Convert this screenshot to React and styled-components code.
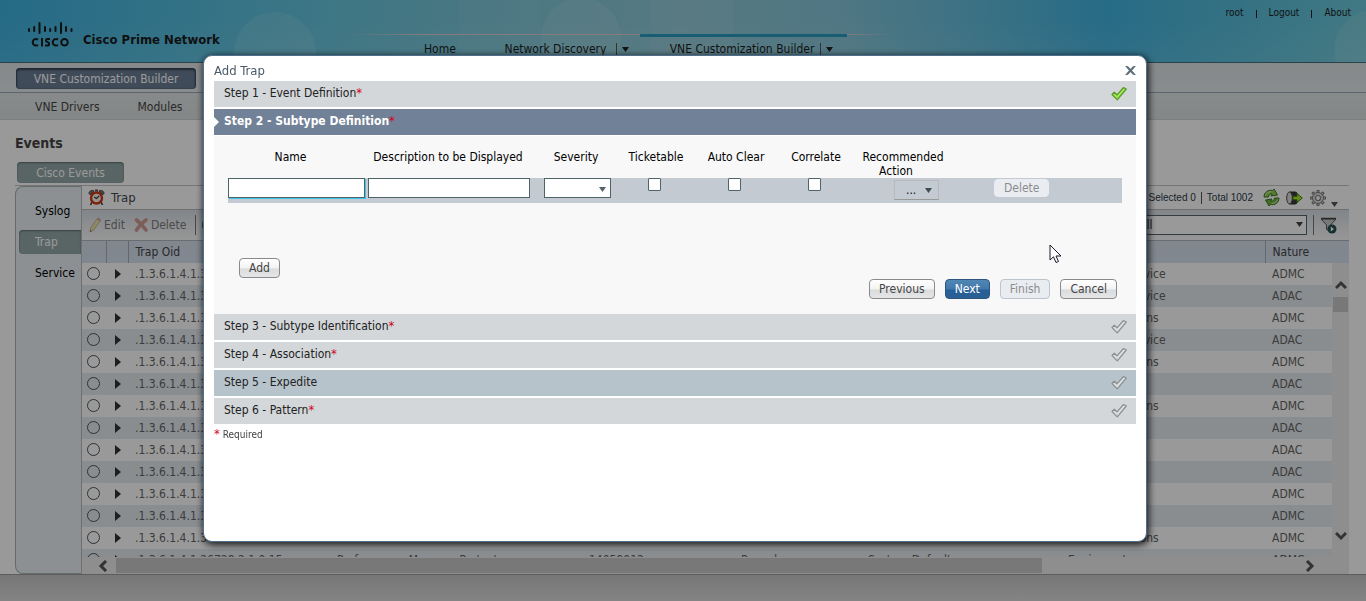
import React from 'react'
import styled, { createGlobalStyle, css } from 'styled-components'

const rows = [
  { type: 'Quality Of Service', nature: 'ADMC' },
  { type: 'Quality Of Service', nature: 'ADAC' },
  { type: 'Communications', nature: 'ADMC' },
  { type: 'Quality Of Service', nature: 'ADAC' },
  { type: 'Communications', nature: 'ADMC' },
  { type: 'Equipment', nature: 'ADAC' },
  { type: 'Communications', nature: 'ADMC' },
  { type: 'Equipment', nature: 'ADAC' },
  { type: 'Equipment', nature: 'ADAC' },
  { type: 'Equipment', nature: 'ADAC' },
  { type: 'Equipment', nature: 'ADMC' },
  { type: 'Equipment', nature: 'ADMC' },
  { type: 'Communications', nature: 'ADMC' },
]

const flags = ['Ticketable', 'Auto Clear', 'Correlate']

const laterSteps = [
  { title: 'Step 3 - Subtype Identification', required: true },
  { title: 'Step 4 - Association', required: true },
  { title: 'Step 5 - Expedite', hover: true },
  { title: 'Step 6 - Pattern', required: true },
]

const CiscoLogo = () => (
  <svg width='46' height='26' viewBox='0 0 46 26' role='img' aria-label='Cisco'>
    <g stroke='#1c1c1c' strokeWidth='2' strokeLinecap='round'>
      <path d='M1 7v2M6.200 5v4M11.500 1v10M17 5v4M22.200 7v2M27.500 5v4M33 1v10M38 5v4M43.500 7v2' />
    </g>
    <g fill='none' stroke='#1c1c1c' strokeWidth='2'>
      <path d='M10 17.600a3 3 0 0 0-2-.6 3.300 3.300 0 0 0 0 6.600 3 3 0 0 0 2-.6' />
      <path d='M14 16v8.500' />
      <path d='M22 17h-2.500c-2 0-2 2.600-.3 2.900 2.600.5 2.600 3.700-.2 3.700H17' />
      <path d='M30 17.600a3 3 0 0 0-2-.6 3.300 3.300 0 0 0 0 6.600 3 3 0 0 0 2-.6' />
      <circle cx='36.500' cy='20.300' r='3.300' />
    </g>
  </svg>
)

const CheckIcon = ({ done }) => (
  <svg width='18' height='16' viewBox='0 0 18 16' aria-hidden='true'>
    <path
      d='M2 9.500l2.300-2.300 2.700 2.600L13.500 2.500 16.300 4 7.300 14.800z'
      fill={done ? '#8ddb3c' : '#d3d7d9'}
      stroke={done ? '#5a9a30' : '#8b9092'}
      strokeWidth='1.200'
      strokeLinejoin='round'
    />
    <path
      d='M4 9.300l3 3L14.300 4'
      fill='none'
      stroke={done ? '#b5f06a' : '#e6e8e9'}
      strokeWidth='1'
    />
  </svg>
)

const ClockIcon = () => (
  <svg width='17' height='17' viewBox='0 0 17 17' aria-hidden='true'>
    <path d='M4 13l-1.500 3M13 13l1.500 3' stroke='#3c3c3c' strokeWidth='1.600' />
    <path d='M1 4.500C1 2 4 .5 6 2L2.500 6zM16 4.500C16 2 13 .5 11 2l3.500 4z' fill='#777' stroke='#444' />
    <path d='M7 1.500h3' stroke='#555' strokeWidth='2' />
    <circle cx='8.500' cy='9' r='5.500' fill='#f8f4f0' stroke='#cf3a14' strokeWidth='2.400' />
    <path d='M6.200 8l2.300 1.500 2.700-2.700' fill='none' stroke='#333' strokeWidth='1.200' />
  </svg>
)

const PencilIcon = () => (
  <svg width='12' height='16' viewBox='0 0 12 16' aria-hidden='true'>
    <path d='M1 15l.8-4.500L8 2l3 2-6 8.800z' fill='#efe3a8' stroke='#c5b98d' />
    <path d='M8 2l1-1.200 2.500 1.700L11 4z' fill='#e5b9b0' stroke='#c9a79d' />
    <path d='M1 15l.4-2 1.300.9z' fill='#666' />
  </svg>
)

const CrossIcon = () => (
  <svg width='14' height='14' viewBox='0 0 14 14' aria-hidden='true'>
    <path d='M2.500 2C5 4 9 8 12 12M12 2C9 4 5 8 2.500 12' stroke='#cf9c92' strokeWidth='3.600' strokeLinecap='round' />
  </svg>
)

const RefreshIcon = () => (
  <svg width='17' height='17' viewBox='0 0 17 17' aria-hidden='true'>
    <path d='M1 8C1 3.500 5 .5 9.500 1.500L11 0l3.500 6-6.500 1 1.200-2C7 4.500 5.800 5.800 5.500 8z' fill='#8ccf55' stroke='#3c7a22' />
    <path d='M16 9c0 4.500-4 7.500-8.500 6.500L6 17l-3.500-6L9 10l-1.200 2c2.200.5 3.400-.8 3.700-3z' fill='#6fb53c' stroke='#3c7a22' />
    <path d='M2.500 6.500C3 4 5.500 2.500 8.500 2.700M14.500 10.500c-.5 2.500-3 4-6 3.800' fill='none' stroke='#dcf5bb' />
  </svg>
)

const ExportIcon = () => (
  <svg width='17' height='14' viewBox='0 0 17 14' aria-hidden='true'>
    <path d='M3.500 1H9a2 2 0 0 1 2 2v8a2 2 0 0 1-2 2H3.500z' fill='#3a3a3a' stroke='#2c2c2c' />
    <ellipse cx='3.500' cy='7' rx='2.800' ry='6' fill='#dcdcdc' stroke='#4c4c4c' />
    <path d='M7 5.300h4V2.500L16.300 7 11 11.500V8.700H7z' fill='#a6e82c' stroke='#447f10' />
  </svg>
)

const GearIcon = () => (
  <svg width='18' height='18' viewBox='0 0 18 18' aria-hidden='true'>
    <path d='M9 1v16M1 9h16M3.300 3.300l11.400 11.400M14.700 3.300L3.300 14.700' stroke='#7d7d7d' strokeWidth='3' />
    <path d='M9 2v14M2 9h14M4 4l10 10M14 4L4 14' stroke='#dcdcdc' strokeWidth='1' />
    <circle cx='9' cy='9' r='5.500' fill='#dcdcdc' stroke='#7d7d7d' />
    <circle cx='9' cy='9' r='2.500' fill='#fff' stroke='#7d7d7d' strokeWidth='1.200' />
  </svg>
)

const FilterIcon = () => (
  <svg width='17' height='17' viewBox='0 0 17 17' aria-hidden='true'>
    <path d='M1 2h15L10.500 8v6l-4-1.500V8z' fill='#c8c8c8' stroke='#555' />
    <path d='M1 1.500h15' stroke='#444' strokeWidth='1.500' />
    <circle cx='12' cy='12' r='4.500' fill='#24504f' />
    <path d='M10.800 9.500v5l3.200-2.500z' fill='#fff' />
  </svg>
)

const Chevron = ({ d, label }) => (
  <svg width='12' height='12' viewBox='0 0 12 12' role='img' aria-label={label}>
    <path d={d} fill='none' stroke='#555' strokeWidth='3' />
  </svg>
)

const Caret = ({ fill = '#222' }) => (
  <svg width='7' height='5' viewBox='0 0 7 5' aria-hidden='true'>
    <path d='M0 0h7L3.500 5z' fill={fill} />
  </svg>
)

const CloseIcon = () => (
  <svg width='11' height='9' viewBox='0 0 11 9' aria-hidden='true'>
    <path d='M2 .8l7 7.400M9 .8L2 8.200' stroke='#5a6c78' strokeWidth='2' />
    <path d='M.5.5h2M8.500.5h2M.5 8.500h2M8.500 8.500h2' stroke='#5a6c78' />
  </svg>
)

const App = () => {
  return (
    <>
      <GlobalStyle />
      <Page>
        <Header>
          <HeaderArt viewBox='0 0 1366 62' preserveAspectRatio='none' aria-hidden='true'>
            <g fill='#fff' fillOpacity='0.1'>
              <circle cx='275' cy='53' r='41' />
              <circle cx='581' cy='38' r='40' />
              <circle cx='1374' cy='50' r='40' />
              <path d='M651 0h82v62h-82z' fillOpacity='0.05' />
              <path d='M459 0h82v62h-82z' fillOpacity='0.03' />
            </g>
          </HeaderArt>
          <Brand>
            <CiscoLogo />
            <h1>Cisco Prime Network</h1>
          </Brand>
          <MainNav>
            <NavItem $width={86} href='#home'>Home</NavItem>
            <NavItem $width={162} href='#discovery'>
              Network Discovery
              <NavMenu><Caret /></NavMenu>
            </NavItem>
            <NavItem $width={207} $active href='#builder'>
              VNE Customization Builder
              <NavMenu $tight><Caret /></NavMenu>
            </NavItem>
            <NavTail />
          </MainNav>
          <UserLinks>
            <span>root</span>
            <i />
            <a href='#logout'>Logout</a>
            <i />
            <a href='#about'>About</a>
          </UserLinks>
        </Header>
        <SubBar>
          <Pill $main href='#builder'>VNE Customization Builder</Pill>
        </SubBar>
        <SectionBar>
          <a href='#drivers'>VNE Drivers</a>
          <a href='#modules'>Modules</a>
        </SectionBar>
        <Main>
          <h2>Events</h2>
          <Pill href='#cisco-events'>Cisco Events</Pill>
          <Workspace>
            <SideTabs>
              <SideTab href='#syslog'>Syslog</SideTab>
              <SideTab href='#trap' $active>Trap</SideTab>
              <SideTab href='#service'>Service</SideTab>
            </SideTabs>
            <Panel>
              <PanelTitle>
                <ClockIcon />
                <h3>Trap</h3>
                <Counts>
                  <span>Selected 0</span>
                  <span>Total 1002</span>
                </Counts>
                <IconButton aria-label='Refresh'><RefreshIcon /></IconButton>
                <IconButton aria-label='Export'><ExportIcon /></IconButton>
                <IconButton aria-label='Settings'>
                  <GearIcon />
                  <Caret fill='#555' />
                </IconButton>
              </PanelTitle>
              <Toolbar>
                <ToolButton disabled><PencilIcon />Edit</ToolButton>
                <ToolButton disabled><CrossIcon />Delete</ToolButton>
                <Divider />
                <PlusMark />
                <FilterBox>
                  <FilterSelect aria-label='Show' defaultValue='All'>
                    <option>All</option>
                  </FilterSelect>
                  <Caret fill='#444' />
                </FilterBox>
                <Divider />
                <IconButton aria-label='Filter'><FilterIcon /></IconButton>
              </Toolbar>
              <GridArea>
                <TableScroll>
                  <TrapTable>
                    <colgroup>
                      <col style={{ width: 24 }} />
                      <col style={{ width: 22 }} />
                      <col style={{ width: 202 }} />
                      <col style={{ width: 252 }} />
                      <col style={{ width: 152 }} />
                      <col style={{ width: 127 }} />
                      <col />
                      <col style={{ width: 204 }} />
                      <col style={{ width: 67 }} />
                    </colgroup>
                    <thead>
                      <tr>
                        <th aria-label='Select' />
                        <th aria-label='Expand' />
                        <th>Trap Oid</th>
                        <th />
                        <th />
                        <th />
                        <th />
                        <th />
                        <th>Nature</th>
                      </tr>
                    </thead>
                    <tbody>
                      {rows.map((row, index) => (
                        <tr key={index}>
                          <td><RowRadio aria-label={`Select row ${index + 1}`} /></td>
                          <td><Expander /></td>
                          <td>.1.3.6.1.4.1.3</td>
                          <td />
                          <td />
                          <td />
                          <td />
                          <td>{row.type}</td>
                          <td>{row.nature}</td>
                        </tr>
                      ))}
                      <tr>
                        <td><RowRadio aria-label='Select row 14' /></td>
                        <td><Expander /></td>
                        <td>.1.3.6.1.4.1.26728.2.1.0.15</td>
                        <td>Performance Manager Protect</td>
                        <td>14059012</td>
                        <td>Parsed</td>
                        <td>System Default</td>
                        <td>Equipment</td>
                        <td>ADMC</td>
                      </tr>
                    </tbody>
                  </TrapTable>
                </TableScroll>
                <VerticalBar>
                  <Chevron label='Scroll up' d='M1 9l5-5 5 5' />
                  <VerticalThumb />
                  <Chevron label='Scroll down' d='M1 3l5 5 5-5' />
                </VerticalBar>
              </GridArea>
              <HorizontalBar>
                <Chevron label='Scroll left' d='M9 1L4 6l5 5' />
                <HorizontalThumb />
                <Chevron label='Scroll right' d='M3 1l5 5-5 5' />
              </HorizontalBar>
            </Panel>
          </Workspace>
        </Main>
        <Footer />
      </Page>

      <Backdrop>
        <Dialog role='dialog' aria-modal='true' aria-labelledby='dialog-title'>
          <DialogTitle>
            <h2 id='dialog-title'>Add Trap</h2>
            <IconButton aria-label='Close'><CloseIcon /></IconButton>
          </DialogTitle>
          <Steps>
            <Step>
              <span>Step 1 - Event Definition<Star>*</Star></span>
              <CheckIcon done />
            </Step>
            <Step $current>
              <span>Step 2 - Subtype Definition<Star>*</Star></span>
            </Step>
            <StepBody>
              <FieldHeads>
                <label htmlFor='name'>Name</label>
                <label htmlFor='description'>Description to be Displayed</label>
                <label htmlFor='severity'>Severity</label>
                {flags.map((flag) => (
                  <label key={flag} htmlFor={flag}>{flag}</label>
                ))}
                <ActionHead id='action-head'>
                  <span>Recommended</span>
                  <span>Action</span>
                </ActionHead>
              </FieldHeads>
              <FieldRow>
                <TextInput id='name' type='text' $focused />
                <TextInput id='description' type='text' />
                <SeverityBox>
                  <select id='severity' defaultValue=''>
                    <option value='' />
                  </select>
                  <Caret fill='#55646a' />
                </SeverityBox>
                {flags.map((flag) => (
                  <Tick key={flag} id={flag} type='checkbox' />
                ))}
                <ActionMenu aria-labelledby='action-head'>
                  ...
                  <Caret fill='#3f4b55' />
                </ActionMenu>
                <Button $small disabled>Delete</Button>
              </FieldRow>
              <AddLine>
                <Button>Add</Button>
              </AddLine>
              <Actions>
                <Button>Previous</Button>
                <Button $primary>Next</Button>
                <Button disabled>Finish</Button>
                <Button>Cancel</Button>
              </Actions>
              <Pointer width='13' height='20' viewBox='0 0 13 20' aria-hidden='true'>
                <path d='M1 1v15l3.500-3.200L7 18.500l2.500-1-2.500-5.500h5z' fill='#fff' stroke='#1b1b2b' />
              </Pointer>
            </StepBody>
            {laterSteps.map((step) => (
              <Step key={step.title} $hover={step.hover}>
                <span>
                  {step.title}
                  {step.required && <Star>*</Star>}
                </span>
                <CheckIcon />
              </Step>
            ))}
          </Steps>
          <Required><Star>*</Star> Required</Required>
        </Dialog>
      </Backdrop>
    </>
  )
}

const GlobalStyle = createGlobalStyle`
  * {
    box-sizing: border-box;
  }
  body {
    margin: 0;
    background: #fff;
    overflow: hidden;
  }
  body, button, input, select {
    font-family: 'DejaVu Sans Condensed', Roboto, sans-serif;
    font-size: 12px;
  }
  h1, h2, h3 {
    margin: 0;
  }
  a {
    color: inherit;
    text-decoration: none;
  }
  svg {
    display: block;
    flex: none;
  }
`
const Page = styled.div`
  display: flex;
  flex-direction: column;
  min-height: 100vh;
`
const Header = styled.header`
  position: relative;
  display: flex;
  height: 63px;
  border-bottom: 1px solid #44707e;
  background:
    linear-gradient(to bottom, transparent 30%, rgba(255, 255, 255, 0.06)),
    linear-gradient(to right, #3fb2df 0, #60c4df 20%, #7cc8d9 36%, #8fcad8 50%, #84c6da 62%, #42b4df 81%, #56bddb 90%, #6ec9da 100%);
  color: #1c1c1c;
`
const HeaderArt = styled.svg`
  position: absolute;
  inset: 0;
  width: 100%;
  height: 100%;
`
const Brand = styled.div`
  position: relative;
  display: flex;
  gap: 9px;
  width: 344px;
  padding: 22px 0 0 28px;
  h1 {
    padding-top: 10px;
    font-size: 13px;
    line-height: 16px;
  }
`
const MainNav = styled.nav`
  position: relative;
  display: flex;
  align-items: flex-start;
  margin-top: 34px;
  padding-left: 48px;
  background: linear-gradient(to right, transparent, #dccdd2 80px, #dccdd2 500px, transparent) no-repeat 0 0 / 100% 1px;
`
const NavItem = styled.a`
  display: flex;
  justify-content: center;
  align-items: center;
  width: ${(props) => props.$width}px;
  padding: 4px 0 0 16px;
  border-top: 3px solid ${(props) => (props.$active ? '#2b9cc0' : 'transparent')};
  line-height: 16px;
  &:first-child {
    justify-content: flex-start;
    padding-left: 32px;
  }
`
const NavMenu = styled.span`
  margin-left: ${(props) => (props.$tight ? 6 : 10)}px;
  padding: 4px 0 3px 5px;
  border-left: 1px solid #555;
`
const NavTail = styled.span`
  width: 46px;
`
const UserLinks = styled.div`
  position: relative;
  display: flex;
  gap: 12px;
  margin-left: auto;
  padding: 7px 15px 0 0;
  font-size: 10px;
  line-height: 12px;
  i {
    width: 1px;
    height: 8px;
    margin-top: 3px;
    background: #222;
  }
`
const SubBar = styled.div`
  height: 30px;
  padding: 5px 16px 0;
  border-bottom: 1px solid #9ea9b8;
  background: linear-gradient(#e0e4e6, #e4eaee);
`
const Pill = styled.a`
  display: block;
  height: 21px;
  border-radius: 4px;
  color: #fff;
  line-height: 22px;
  text-align: center;
  ${(props) =>
    props.$main
      ? css`
          width: 180px;
          background: #6c7e95;
          box-shadow: inset 0 1px 2px 1px #33404f;
        `
      : css`
          width: 107px;
          margin: 10px 0 2px 2px;
          background: #95a8a9;
          box-shadow: inset 0 1px 2px #5b6c6c;
        `}
`
const SectionBar = styled.nav`
  display: flex;
  gap: 38px;
  height: 27px;
  padding-left: 35px;
  border-bottom: 1px solid #d0d4d4;
  background: linear-gradient(#e2e7e8, #dce1e0);
  color: #444;
  line-height: 28px;
`
const Main = styled.main`
  display: flex;
  flex: 1;
  flex-direction: column;
  padding: 14px 17px 0 15px;
  h2 {
    color: #444;
    font-size: 14px;
    line-height: 18px;
  }
`
const Workspace = styled.div`
  display: flex;
  flex: 1;
  border-top: 1px solid #c4c4c4;
`
const SideTabs = styled.nav`
  display: flex;
  flex-direction: column;
  gap: 7px;
  width: 67px;
  padding: 12px 0 0 3px;
  border: 1px solid #a3b5b3;
  border-right-color: #b5bbbe;
  border-radius: 8px 0 0 8px;
  background: #e9f0f5;
`
const SideTab = styled.a`
  height: 24px;
  padding-left: 16px;
  border-radius: 4px 0 0 4px;
  line-height: 24px;
  ${(props) =>
    props.$active &&
    css`
      color: #fff;
      background: #95a8a9;
      box-shadow: inset 0 1px 2px #5b6c6c;
    `}
`
const Panel = styled.section`
  flex: 1;
  min-width: 0;
`
const PanelTitle = styled.div`
  display: flex;
  align-items: center;
  gap: 6px;
  height: 24px;
  padding: 0 11px 0 6px;
  border-bottom: 1px solid #b9b9b9;
  h3 {
    margin-right: auto;
    color: #3f4a55;
    font-size: 13px;
    font-weight: normal;
  }
`
const Counts = styled.div`
  display: flex;
  margin-right: 4px;
  color: #2c3a4a;
  font-family: 'Liberation Sans', sans-serif;
  font-size: 10px;
  line-height: 12px;
  span + span {
    margin-left: 5px;
    padding-left: 5px;
    border-left: 1px solid #555;
  }
`
const IconButton = styled.button`
  display: flex;
  align-items: flex-end;
  gap: 4px;
  padding: 0;
  border: 0;
  background: none;
`
const Toolbar = styled.div`
  display: flex;
  align-items: center;
  gap: 6px;
  height: 31px;
  padding: 0 12px 0 7px;
  border-bottom: 1px solid #aeb6be;
  background: linear-gradient(#d9dfe6, #fbfbfb);
`
const ToolButton = styled.button`
  display: flex;
  align-items: center;
  gap: 3px;
  margin-right: 3px;
  padding: 0;
  border: 0;
  background: none;
  color: #7c7c7c;
`
const Divider = styled.span`
  width: 1px;
  height: 20px;
  background: #777;
`
const PlusMark = styled.span`
  width: 8px;
  height: 10px;
  border-radius: 4px;
  background: #2f9440;
`
const FilterBox = styled.div`
  position: relative;
  width: 180px;
  margin-left: auto;
  svg {
    position: absolute;
    top: 7px;
    right: 4px;
    pointer-events: none;
  }
`
const FilterSelect = styled.select`
  display: block;
  appearance: none;
  width: 100%;
  height: 20px;
  padding: 0 11px;
  border: 1px solid #55646a;
  border-radius: 0;
  background: #fff;
  color: #333;
`
const GridArea = styled.div`
  display: flex;
  height: 316px;
`
const TableScroll = styled.div`
  flex: 1;
  min-width: 0;
  overflow: hidden;
  background: #fff;
`
const TrapTable = styled.table`
  width: 100%;
  table-layout: fixed;
  border-collapse: collapse;
  line-height: 16px;
  white-space: nowrap;
  th, td {
    height: 22px;
    padding: 0 0 1px 7px;
    overflow: hidden;
    text-align: left;
    vertical-align: middle;
  }
  th {
    border-right: 1px solid #a3adb8;
    background: #d7e1ef;
    color: #444;
    font-weight: normal;
  }
  th:last-child {
    border-right: 0;
  }
  td {
    color: #646464;
  }
  td:first-child {
    padding-left: 5px;
  }
  tbody tr:nth-child(even) {
    background: #e4ebf0;
  }
`
const RowRadio = styled.input.attrs({ type: 'radio', name: 'trap' })`
  display: block;
  appearance: none;
  width: 13px;
  height: 13px;
  margin: 0;
  border: 1px solid #4d5357;
  border-radius: 50%;
`
const Expander = styled.span`
  display: block;
  width: 0;
  margin-left: 2px;
  border-left: 6px solid #333;
  border-top: 5px solid transparent;
  border-bottom: 5px solid transparent;
`
const VerticalBar = styled.div`
  display: flex;
  flex-direction: column;
  align-items: center;
  gap: 6px;
  width: 17px;
  padding: 16px 0 15px;
  border-top: 22px solid #d7e1ef;
  background: #ededed;
  svg:last-child {
    margin-top: auto;
  }
`
const VerticalThumb = styled.div`
  width: 15px;
  height: 15px;
  background: #c8c8c8;
`
const HorizontalBar = styled.div`
  display: flex;
  align-items: center;
  gap: 7px;
  height: 17px;
  padding: 0 33px 0 15px;
  background: #ededed;
  svg:last-child {
    margin-left: auto;
  }
`
const HorizontalThumb = styled.div`
  width: 76%;
  height: 15px;
  background: #c8c8c8;
`
const Footer = styled.footer`
  height: 27px;
  border-top: 1px solid #9b9b9b;
  background: linear-gradient(#c6c6c6, #dcdcdc);
`
const Backdrop = styled.div`
  position: fixed;
  inset: 0;
  display: flex;
  align-items: flex-start;
  padding: 55px 219px 0 203px;
  background: rgba(0, 0, 0, 0.4);
`
const Dialog = styled.div`
  flex: 1;
  min-height: 487px;
  padding: 4px 10px;
  border: 1px solid #4f6d8c;
  border-radius: 9px;
  background: #fff;
  box-shadow: 1px 2px 7px 1px rgba(0, 0, 0, 0.8);
`
const DialogTitle = styled.div`
  display: flex;
  justify-content: space-between;
  align-items: center;
  height: 21px;
  h2 {
    color: #4a5a68;
    font-size: 13px;
    font-weight: normal;
    line-height: 18px;
  }
`
const Steps = styled.div`
  display: flex;
  flex-direction: column;
  gap: 2px;
`
const Step = styled.div`
  display: flex;
  justify-content: space-between;
  align-items: center;
  height: 26px;
  padding: 0 8px 2px 10px;
  background: ${(props) => (props.$hover ? '#b7c3ca' : '#d3d7d9')};
  color: #222;
  ${(props) =>
    props.$current &&
    css`
      position: relative;
      background: #718197;
      color: #fff;
      font-weight: bold;
      &::before {
        content: '';
        position: absolute;
        top: 8px;
        left: 0;
        border-left: 5px solid #fff;
        border-top: 5px solid transparent;
        border-bottom: 5px solid transparent;
      }
    `}
`
const Star = styled.span`
  color: #d0021b;
  font-size: 13px;
  font-weight: normal;
  line-height: 12px;
`
const StepBody = styled.div`
  position: relative;
  margin: -1px 0 -2px;
  padding: 14px 14px 15px;
  background: #f8f8f8;
`
const fieldColumns = '140px 168px 80px 80px 80px 80px 80px'
const FieldHeads = styled.div`
  display: grid;
  grid-template-columns: ${fieldColumns};
  height: 28px;
  line-height: 14px;
  label {
    text-align: center;
  }
  label:first-child {
    padding-right: 15px;
  }
  label:nth-child(2) {
    padding-right: 8px;
  }
`
const ActionHead = styled.div`
  display: flex;
  flex-direction: column;
  align-items: center;
  padding-left: 14px;
  span:last-child {
    margin-right: 14px;
  }
`
const FieldRow = styled.div`
  display: grid;
  grid-template-columns: ${fieldColumns} 1fr;
  align-items: start;
  height: 25px;
  background: #c3cad1;
`
const TextInput = styled.input`
  width: ${(props) => (props.$focused ? 137 : 162)}px;
  height: 20px;
  border: 1px solid #4f6469;
  background: #fff;
  box-shadow: ${(props) => (props.$focused ? '1px 1px 0 #3fc4ea' : 'none')};
`
const SeverityBox = styled.div`
  position: relative;
  margin-left: 8px;
  width: 67px;
  select {
    display: block;
    appearance: none;
    width: 100%;
    height: 20px;
    border: 1px solid #4f6469;
    border-radius: 0;
    background: #fff;
  }
  svg {
    position: absolute;
    top: 9px;
    right: 5px;
    pointer-events: none;
  }
`
const Tick = styled.input`
  appearance: none;
  width: 13px;
  height: 13px;
  margin: 0 0 0 32px;
  border: 1px solid #4f6469;
  border-radius: 1px;
  background: #fff;
`
const ActionMenu = styled.button`
  display: flex;
  align-items: center;
  justify-content: space-between;
  width: 45px;
  height: 20px;
  margin: 2px 0 0 38px;
  padding: 0 6px 0 11px;
  border: 1px solid #b9b9b9;
  border-bottom-color: #999;
  background: none;
  color: #111;
`
const Button = styled.button`
  height: 20px;
  padding: 0 9px;
  border: 1px solid #8a8a8a;
  border-radius: 4px;
  background: linear-gradient(#fff 0, #f3f3f3 50%, #d9dbdd 55%, #e4e6e8);
  color: #444;
  line-height: 18px;
  ${(props) =>
    props.$primary &&
    css`
      border-color: #2b5480;
      background: linear-gradient(#4f86b4 0, #4279a9 50%, #276098 55%, #2a5f94);
      color: #fff;
    `}
  &:disabled {
    border-color: #bcc4cc;
    background: #e9edf2;
    color: #8c8c8c;
  }
  ${(props) =>
    props.$small &&
    css`
      justify-self: start;
      height: 18px;
      margin: 1px 0 0 58px;
      line-height: 16px;
      &:disabled {
        border-color: #e9edf2;
      }
    `}
`
const AddLine = styled.div`
  padding: 55px 11px 0;
`
const Actions = styled.div`
  display: flex;
  justify-content: flex-end;
  gap: 10px;
  margin-top: 1px;
  padding-right: 5px;
`
const Pointer = styled.svg`
  position: absolute;
  top: 108px;
  right: 74px;
`
const Required = styled.p`
  margin: 4px 0 0;
  color: #444;
  font-size: 10px;
  line-height: 14px;
`

export default App
